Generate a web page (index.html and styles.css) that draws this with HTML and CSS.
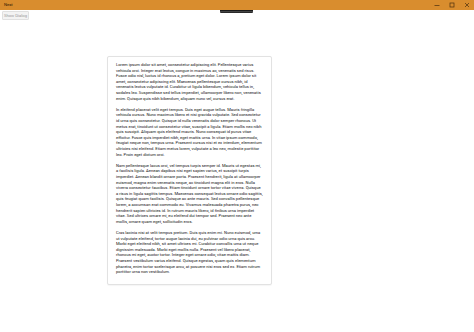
FILE: index.html
```html
<!DOCTYPE html>
<html>
<head>
<meta charset="utf-8">
<link rel="stylesheet" href="styles.css">
</head>
<body>
<div class="titlebar">
  <span class="title">Nest</span>
  <div class="caption">
    <span class="cap-btn"><svg width="6" height="6" viewBox="0 0 6 6"><path d="M0.5 3.5h5" stroke="#4a2f0c" stroke-width="0.7"/></svg></span>
    <span class="cap-btn"><svg width="6" height="6" viewBox="0 0 6 6"><rect x="1" y="1" width="4" height="4" fill="none" stroke="#4a2f0c" stroke-width="0.7"/></svg></span>
    <span class="cap-btn"><svg width="6" height="6" viewBox="0 0 6 6"><path d="M1 1l4 4M5 1l-4 4" stroke="#4a2f0c" stroke-width="0.7"/></svg></span>
  </div>
</div>
<div class="drag-handle"></div>
<div class="toolbar">
  <button class="btn">Show Dialog</button>
</div>
<main class="main">
  <div class="card">
    <p>Lorem ipsum dolor sit amet, consectetur adipiscing elit. Pellentesque varius vehicula orci. Integer erat lectus, congue in maximus ac, venenatis sed risus. Fusce odio nisl, luctus id rhoncus a, pretium eget dolor. Lorem ipsum dolor sit amet, consectetur adipiscing elit. Maecenas pellentesque cursus nibh, id venenatis lectus vulputate id. Curabitur ut ligula bibendum, vehicula tellus in, sodales leo. Suspendisse sed tellus imperdiet, ullamcorper libero non, venenatis enim. Quisque quis nibh bibendum, aliquam nunc vel, cursus erat.</p>
    <p>In eleifend placerat velit eget tempus. Duis eget augue tellus. Mauris fringilla vehicula cursus. Nunc maximus libero et nisi gravida vulputate. Sed consectetur id urna quis consectetur. Quisque id nulla venenatis dolor semper rhoncus. Ut metus erat, tincidunt ut consectetur vitae, suscipit a ligula. Etiam mollis nec nibh quis suscipit. Aliquam quis eleifend mauris. Nunc consequat id purus vitae efficitur. Fusce quis imperdiet nibh, eget mattis urna. In vitae ipsum commodo, feugiat neque non, tempus urna. Praesent cursus nisi et ex interdum, elementum ultricies nisi eleifend. Etiam metus lorem, vulputate a leo nec, molestie porttitor leo. Proin eget dictum orci.</p>
    <p>Nam pellentesque lacus orci, vel tempus turpis semper id. Mauris ut egestas mi, a facilisis ligula. Aenean dapibus nisi eget sapien varius, et suscipit turpis imperdiet. Aenean blandit ornare porta. Praesent hendrerit, ligula at ullamcorper euismod, magna enim venenatis neque, ac tincidunt magna elit in eros. Nulla viverra consectetur faucibus. Etiam tincidunt ornare tortor vitae viverra. Quisque a risus in ligula sagittis tempus. Maecenas consequat lectus ornare odio sagittis, quis feugiat quam facilisis. Quisque ac ante mauris. Sed convallis pellentesque lorem, a accumsan erat commodo eu. Vivamus malesuada pharetra purus, nec hendrerit sapien ultricies id. In rutrum mauris libero, id finibus urna imperdiet vitae. Sed ultrices ornare mi, eu eleifend dui tempor sed. Praesent nec ante mollis, ornare quam eget, sollicitudin eros.</p>
    <p>Cras lacinia nisi at velit tempus pretium. Duis quis enim mi. Nunc euismod, urna ut vulputate eleifend, tortor augue lacinia dui, eu pulvinar odio urna quis arcu. Morbi eget eleifend nibh, sit amet ultrices mi. Curabitur convallis urna ut neque dignissim malesuada. Morbi eget mollis nulla. Praesent vel libero placerat, rhoncus mi eget, auctor tortor. Integer eget ornare odio, vitae mattis diam. Praesent vestibulum varius eleifend. Quisque egestas, quam quis elementum pharetra, enim tortor scelerisque arcu, at posuere nisi eros sed ex. Etiam rutrum porttitor urna non vestibulum.</p>
  </div>
</main>
</body>
</html>
```
FILE: styles.css
```css
* { box-sizing: border-box; }
html, body { margin: 0; padding: 0; }
body {
  width: 474px;
  height: 332px;
  background: #ffffff;
  font-family: Roboto, "Liberation Sans", sans-serif;
  position: relative;
  overflow: hidden;
}
.titlebar {
  height: 10px;
  background: #d98d2e;
  display: flex;
  align-items: center;
  justify-content: space-between;
  padding-left: 4px;
}
.title {
  font-size: 4.2px;
  color: #2e1a04;
  line-height: 10px;
}
.caption {
  display: flex;
  height: 10px;
}
.cap-btn {
  width: 15px;
  height: 10px;
  display: flex;
  align-items: center;
  justify-content: center;
}
.drag-handle {
  position: absolute;
  left: 220px;
  top: 10px;
  width: 33px;
  height: 3px;
  background: linear-gradient(#111 0, #222 40%, #555 55%, #111 100%);
  border-radius: 0 0 1px 1px;
}
.toolbar {
  padding: 1px 2px 0;
  display: flex;
}
.btn {
  font-family: inherit;
  font-size: 4.2px;
  color: #9a9a9a;
  background: #f3f3f3;
  border: 0.5px solid #e0e0e0;
  border-radius: 1px;
  height: 9px;
  width: 27px;
  padding: 0;
  line-height: 8px;
}
.main {
  padding: 36px 0 0 107px;
}
.card {
  width: 165px;
  border: 0.6px solid #e2e2e2;
  border-radius: 2px;
  box-shadow: 0 0.5px 1px rgba(0,0,0,0.04);
  padding: 5px 7.5px 9px 8px;
  background: #fff;
}
.card p {
  margin: 0 0 5.7px;
  font-size: 4.1px;
  line-height: 5.6px;
  color: #111;
}
.card p:last-child { margin-bottom: 0; }
```
